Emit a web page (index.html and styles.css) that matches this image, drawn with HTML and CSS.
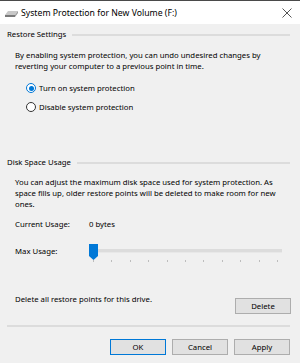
FILE: index.html
```html
<!DOCTYPE html>
<html>
<head>
<meta charset="utf-8">
<link rel="stylesheet" href="styles.css">
</head>
<body>
<div class="window">
  <div class="titlebar">
    <svg class="drive" width="13" height="6" viewBox="0 0 13 6">
      <polygon points="3,0 13,0 10,4 0,4" fill="#c8c8c8"/>
      <polygon points="0,4 10,4 10,6 0,6" fill="#7a7a7a"/>
      <polygon points="10,4 13,0 13,2 10,6" fill="#9a9a9a"/>
    </svg>
    <span class="title">System Protection for New Volume (F:)</span>
    <svg class="close" width="10" height="10" viewBox="0 0 10 10">
      <path d="M0.5 0.5 L9.5 9.5 M9.5 0.5 L0.5 9.5" stroke="#555" stroke-width="1" fill="none"/>
    </svg>
  </div>
  <div class="content">
    <div class="legend legend-first"><span>Restore Settings</span><div class="rule"></div></div>
    <p class="para para-first">By enabling system protection, you can undo undesired changes by<br>reverting your computer to a previous point in time.</p>
    <div class="radio radio-first"><span class="dot checked"></span><span>Turn on system protection</span></div>
    <div class="radio radio-second"><span class="dot"></span><span>Disable system protection</span></div>

    <div class="legend legend-second"><span>Disk Space Usage</span><div class="rule"></div></div>
    <p class="para para-second">You can adjust the maximum disk space used for system protection. As<br>space fills up, older restore points will be deleted to make room for new<br>ones.</p>
    <div class="row usage"><span class="label">Current Usage:</span><span>0 bytes</span></div>
    <div class="row slider-row">
      <span class="label max-label">Max Usage:</span>
      <div class="slider">
        <div class="track"></div>
        <svg class="thumb" width="9" height="16" viewBox="0 0 9 16">
          <polygon points="0,0 9,0 9,12 4.5,16 0,12" fill="#0078d7"/>
        </svg>
        <div class="ticks">
          <i></i><i></i><i></i><i></i><i></i><i></i><i></i><i></i><i></i><i></i><i></i>
        </div>
      </div>
    </div>
    <div class="row delete-row">
      <span class="delete-text">Delete all restore points for this drive.</span>
      <button class="btn delete-btn">Delete</button>
    </div>
    <div class="separator"></div>
    <div class="buttons">
      <button class="btn default">OK</button>
      <button class="btn">Cancel</button>
      <button class="btn">Apply</button>
    </div>
  </div>
</div>
</body>
</html>
```
FILE: styles.css
```css
html, body {
  margin: 0;
  padding: 0;
}
body {
  width: 300px;
  height: 363px;
  overflow: hidden;
  background: #f0f0f0;
  font-family: "Noto Sans", "Open Sans", sans-serif;
  font-size: 7.75px;
  color: #000;
}
.window {
  width: 300px;
  height: 363px;
}
.titlebar {
  height: 23px;
  border-top: 1px solid #4a4a4a;
  background: #ffffff;
  display: flex;
  align-items: center;
  padding: 0 7px 0 5px;
  box-sizing: content-box;
}
.drive {
  margin-top: 3px;
  flex: none;
}
.title {
  margin-left: 3px;
  font-size: 8.7px;
  flex: 1;
  line-height: 12px;
}
.close {
  flex: none;
  margin-right: 1px;
}
.content {
  padding: 0 10px 0 7px;
  display: flex;
  flex-direction: column;
}
.legend {
  display: flex;
  align-items: center;
  height: 11px;
  line-height: 11px;
  gap: 6px;
}
.legend-first { margin-top: 5px; }
.legend-second { margin-top: 44px; }
.rule {
  flex: 1;
  height: 2px;
  background: #dcdcdc;
}
.para {
  margin: 0;
  padding-left: 8px;
  line-height: 11px;
}
.para-first { margin-top: 10px; }
.para-second { margin-top: 9px; }
.radio {
  display: flex;
  align-items: center;
  height: 12px;
  padding-left: 19px;
  gap: 3px;
}
.radio-first { margin-top: 10px; }
.radio-second { margin-top: 7px; }
.dot {
  width: 8px;
  height: 8px;
  border: 1px solid #333;
  border-radius: 50%;
  background: #fff;
  position: relative;
  flex: none;
}
.dot.checked {
  border-color: #0078d7;
}
.dot.checked::after {
  content: "";
  position: absolute;
  left: 1.5px;
  top: 1.5px;
  width: 5px;
  height: 5px;
  border-radius: 50%;
  background: #0078d7;
}
.row {
  display: flex;
  padding-left: 8px;
  line-height: 11px;
}
.label {
  width: 74px;
  flex: none;
}
.usage { margin-top: 9px; }
.slider-row {
  margin-top: 14px;
  height: 20px;
}
.max-label {
  margin-top: 1.5px;
}
.slider {
  position: relative;
  width: 195px;
  height: 20px;
}
.track {
  position: absolute;
  left: 1px;
  right: 2px;
  top: 5px;
  height: 3px;
  background: #dcdcdc;
  border-bottom: 1px solid #e8e8e8;
}
.thumb {
  position: absolute;
  left: 0;
  top: 0;
}
.ticks {
  position: absolute;
  left: 4px;
  width: 185px;
  top: 16px;
  display: flex;
  justify-content: space-between;
}
.ticks i {
  display: block;
  width: 1px;
  height: 2px;
  background: #bdbdbd;
}
.delete-row {
  margin-top: 30px;
  justify-content: space-between;
  align-items: flex-start;
}
.btn {
  font-family: "Noto Sans", "Open Sans", sans-serif;
  font-size: 7.75px;
  color: #000;
  background: #e1e1e1;
  border: 1px solid #adadad;
  width: 56px;
  height: 16px;
  padding: 0;
  margin: 0;
  line-height: 12px;
}
.delete-btn {
  margin-top: 4px;
  margin-right: -1px;
}
.separator {
  margin-top: 11px;
  height: 2px;
  background: #dcdcdc;
}
.buttons {
  margin-top: 12px;
  display: flex;
  justify-content: flex-end;
  gap: 6px;
}
.btn.default {
  border-color: #0078d7;
}
```
